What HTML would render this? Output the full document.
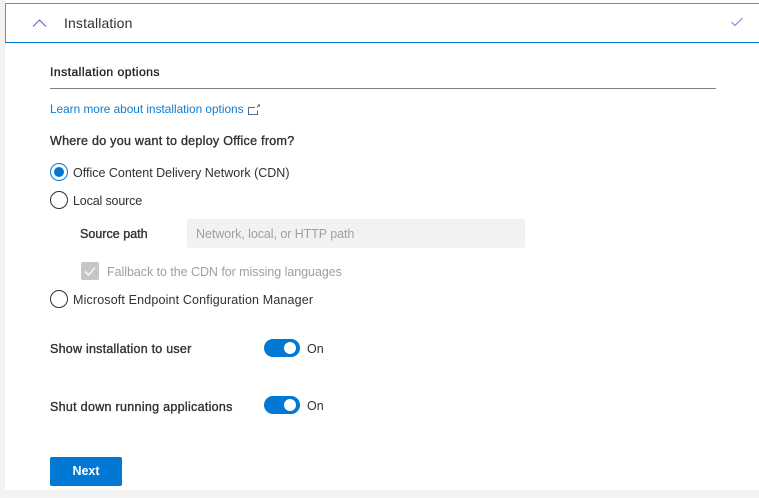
<!DOCTYPE html>
<html><head><meta charset="utf-8"><style>
html,body{margin:0;padding:0;width:759px;height:498px;overflow:hidden;background:#f3f3f3}
body{position:relative;font-family:"Liberation Sans",sans-serif;font-size:12.5px;color:#323130}
.a{position:absolute;white-space:nowrap;line-height:16px}
.b{font-weight:400;-webkit-text-stroke:.35px currentColor;font-size:12.5px;letter-spacing:.2px}
.r{position:absolute;left:50px;width:16px;height:16px;border:1px solid #323130;border-radius:50%;background:#fff}
.t{position:absolute;left:264px;width:36px;height:18px;border-radius:9px;background:#0078d4}
.t i{position:absolute;right:4px;top:3px;width:12px;height:12px;border-radius:50%;background:#fff}
</style></head><body>
<div style="position:absolute;left:5px;top:0;width:754px;height:490px;background:#fff"></div>
<div style="position:absolute;left:5px;top:3px;width:754px;height:1px;background:#8a8886"></div>
<div style="position:absolute;left:5px;top:3px;width:1px;height:39px;background:#8a8886"></div>
<div style="position:absolute;left:5px;top:42px;width:754px;height:1px;background:#0078d4"></div>
<svg style="position:absolute;left:32px;top:18px" width="16" height="10"><path d="M1 8.5L7.5 2L14 8.5" fill="none" stroke="#5b5fc7" stroke-width="1"/></svg>
<svg style="position:absolute;left:729px;top:16px" width="16" height="12"><path d="M2.5 6L6 9.5L13.5 2" fill="none" stroke="#7a7fd8" stroke-width="1"/></svg>
<div class="a" style="left:64px;top:15px;font-size:14px;letter-spacing:.13px">Installation</div>
<div class="a b" style="left:50px;top:64px;font-size:12.2px;color:#201f1e;letter-spacing:.45px">Installation options</div>
<div style="position:absolute;left:50px;top:88px;width:666px;height:1px;background:#808080"></div>
<div class="a" style="left:50px;top:101px;font-size:11.8px;color:#0f7bd0">Learn more about installation options</div>
<svg style="position:absolute;left:247px;top:104px" width="14" height="13"><path d="M8 3.5H1.5V10.5H10.5V6.5M10 3.5L12.5 1M11 1H12.5V2.5" fill="none" stroke="#5566a8" stroke-width="1"/></svg>
<div class="a b" style="left:50px;top:133px;letter-spacing:.28px">Where do you want to deploy Office from?</div>
<div class="r" style="top:163px;border-color:#0078d4"></div>
<div style="position:absolute;left:54px;top:167px;width:10px;height:10px;border-radius:50%;background:#0078d4"></div>
<div class="a" style="left:73px;top:165px">Office Content Delivery Network (CDN)</div>
<div class="r" style="top:191px"></div>
<div class="a" style="left:73px;top:193px;letter-spacing:-.15px">Local source</div>
<div class="a b" style="left:80px;top:226px;letter-spacing:.02px">Source path</div>
<div style="position:absolute;left:187px;top:219px;width:338px;height:29px;background:#f3f2f1;border-radius:2px"></div>
<div class="a" style="left:196px;top:226px;color:#a19f9d;letter-spacing:-.07px">Network, local, or HTTP path</div>
<div style="position:absolute;left:81px;top:262px;width:18px;height:18px;background:#c8c6c4;border-radius:2px"></div>
<svg style="position:absolute;left:81px;top:262px" width="18" height="18"><path d="M4 9.5L7.5 13L14 5.5" fill="none" stroke="#fff" stroke-width="1.3"/></svg>
<div class="a" style="left:107px;top:264px;color:#a19f9d;letter-spacing:-.05px">Fallback to the CDN for missing languages</div>
<div class="r" style="top:290px"></div>
<div class="a" style="left:73px;top:292px;letter-spacing:.15px">Microsoft Endpoint Configuration Manager</div>
<div class="a b" style="left:50px;top:341px;letter-spacing:.24px">Show installation to user</div>
<div class="t" style="top:339px"><i></i></div>
<div class="a" style="left:307px;top:341px">On</div>
<div class="a b" style="left:50px;top:399px;letter-spacing:.3px">Shut down running applications</div>
<div class="t" style="top:396px"><i></i></div>
<div class="a" style="left:307px;top:398px">On</div>
<div style="position:absolute;left:50px;top:457px;width:72px;height:29px;background:#0078d4;border-radius:2px"></div>
<div class="a" style="left:50px;top:463px;width:72px;text-align:center;color:#fff;font-weight:bold;font-size:12.5px">Next</div>
</body></html>
